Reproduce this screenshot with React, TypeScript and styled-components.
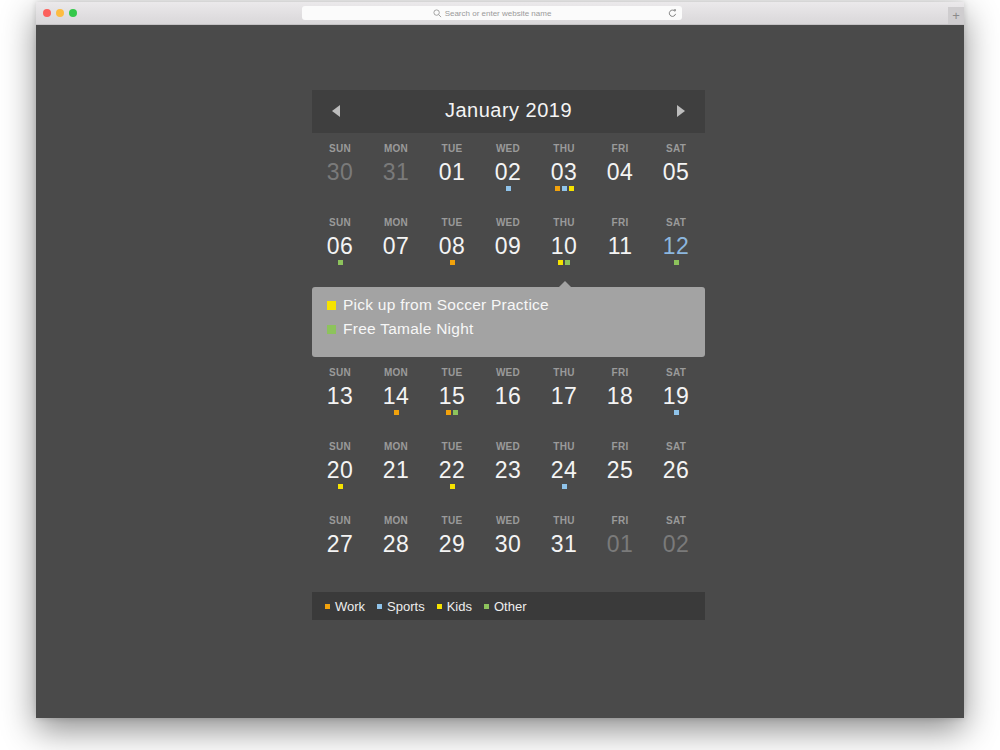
import React from "react";
import styled, { createGlobalStyle, css } from "styled-components";

const GlobalStyle = createGlobalStyle`
  html, body {
    margin: 0;
    padding: 0;
    background: #ffffff;
    font-family: "Liberation Sans", Arial, sans-serif;
  }
`;

const COLORS = {
  work: "#f2a20c",
  sports: "#8fc3ea",
  kids: "#f6e300",
  other: "#8dc35c",
};

type Tag = keyof typeof COLORS;

type Day = {
  num: string;
  muted?: boolean;
  highlight?: boolean;
  tags?: Tag[];
};

const NAMES = ["SUN", "MON", "TUE", "WED", "THU", "FRI", "SAT"];

const weeks: Day[][] = [
  [
    { num: "30", muted: true },
    { num: "31", muted: true },
    { num: "01" },
    { num: "02", tags: ["sports"] },
    { num: "03", tags: ["work", "sports", "kids"] },
    { num: "04" },
    { num: "05" },
  ],
  [
    { num: "06", tags: ["other"] },
    { num: "07" },
    { num: "08", tags: ["work"] },
    { num: "09" },
    { num: "10", tags: ["kids", "other"] },
    { num: "11" },
    { num: "12", highlight: true, tags: ["other"] },
  ],
  [
    { num: "13" },
    { num: "14", tags: ["work"] },
    { num: "15", tags: ["work", "other"] },
    { num: "16" },
    { num: "17" },
    { num: "18" },
    { num: "19", tags: ["sports"] },
  ],
  [
    { num: "20", tags: ["kids"] },
    { num: "21" },
    { num: "22", tags: ["kids"] },
    { num: "23" },
    { num: "24", tags: ["sports"] },
    { num: "25" },
    { num: "26" },
  ],
  [
    { num: "27" },
    { num: "28" },
    { num: "29" },
    { num: "30" },
    { num: "31" },
    { num: "01", muted: true },
    { num: "02", muted: true },
  ],
];

const events: { tag: Tag; title: string }[] = [
  { tag: "kids", title: "Pick up from Soccer Practice" },
  { tag: "other", title: "Free Tamale Night" },
];

const legend: { tag: Tag; label: string }[] = [
  { tag: "work", label: "Work" },
  { tag: "sports", label: "Sports" },
  { tag: "kids", label: "Kids" },
  { tag: "other", label: "Other" },
];

/* browser frame */

const Page = styled.div`
  padding: 2px 36px 32px;
`;

const Window = styled.div`
  display: flex;
  flex-direction: column;
  height: 716px;
  box-shadow: 0 12px 32px rgba(0, 0, 0, 0.45), 0 0 6px rgba(0, 0, 0, 0.15);
`;

const TitleBar = styled.div`
  position: relative;
  display: flex;
  align-items: center;
  height: 22px;
  padding: 0 0 0 7px;
  background: linear-gradient(#ebe9eb, #d9d7d9);
  border-bottom: 1px solid #c4c2c4;
`;

const Lights = styled.div`
  display: flex;
  gap: 5px;
  width: 259px;
`;

const Light = styled.span<{ color: string }>`
  width: 8px;
  height: 8px;
  border-radius: 50%;
  background: ${({ color }) => color};
`;

const AddressBar = styled.div`
  position: relative;
  display: flex;
  align-items: center;
  justify-content: center;
  gap: 3px;
  width: 380px;
  height: 14px;
  background: #fbfbfb;
  border-radius: 3px;
  font-size: 8px;
  color: #9a9a9a;
`;

const Reload = styled.span`
  position: absolute;
  right: 5px;
  top: 2px;
  display: flex;
`;

const PlusButton = styled.div`
  margin-left: auto;
  align-self: flex-end;
  display: flex;
  align-items: center;
  justify-content: center;
  width: 16px;
  height: 17px;
  background: #cfcdcf;
  color: #8a8a8a;
  font-size: 13px;
`;

const Content = styled.div`
  flex: 1;
  background: #4a4a4a;
  padding: 65px 0 0 276px;
`;

/* calendar */

const Calendar = styled.div`
  width: 393px;
  color: #f3f3f3;
`;

const Header = styled.div`
  display: flex;
  align-items: center;
  justify-content: space-between;
  height: 43px;
  padding: 0 19px;
  background: #3f3f3f;
`;

const Title = styled.div`
  font-size: 20px;
  letter-spacing: 0.5px;
  color: #f4f4f4;
  margin-top: -2px;
`;

const ArrowButton = styled.span`
  display: flex;
  width: 10px;
  height: 14px;
  margin-top: -2px;
`;

const Week = styled.div`
  display: grid;
  grid-template-columns: repeat(7, 56px);
  height: 74px;
`;

const Cell = styled.div`
  display: flex;
  flex-direction: column;
  align-items: center;
  padding-top: 10px;
`;

const DayName = styled.div`
  font-size: 10px;
  line-height: 12px;
  font-weight: bold;
  letter-spacing: 0.3px;
  color: #9a9a9a;
`;

const DayNum = styled.div<{ $muted?: boolean; $highlight?: boolean }>`
  margin-top: 4px;
  font-size: 23px;
  line-height: 26px;
  letter-spacing: 0.4px;
  color: #f4f4f4;
  ${({ $muted }) =>
    $muted &&
    css`
      color: #7a7a7a;
    `}
  ${({ $highlight }) =>
    $highlight &&
    css`
      color: #8cb7df;
    `}
`;

const Dots = styled.div`
  display: flex;
  gap: 2px;
  margin-top: 1px;
  height: 5px;
`;

const Dot = styled.span<{ $tag: Tag; $size?: number }>`
  display: block;
  flex-shrink: 0;
  width: ${({ $size = 5 }) => $size}px;
  height: ${({ $size = 5 }) => $size}px;
  background: ${({ $tag }) => COLORS[$tag]};
`;

const Popover = styled.div`
  position: relative;
  margin-top: 6px;
  padding: 6px 15px 16px;
  background: #a3a3a3;
  border-radius: 3px;
  &::before {
    content: "";
    position: absolute;
    top: -6px;
    left: 247px;
    border-left: 6px solid transparent;
    border-right: 6px solid transparent;
    border-bottom: 6px solid #a3a3a3;
  }
`;

const EventRow = styled.div`
  display: flex;
  align-items: center;
  gap: 7px;
  height: 24px;
  font-size: 15.5px;
  color: #f7f7f7;
  letter-spacing: 0.25px;
`;

const Legend = styled.div`
  display: flex;
  align-items: center;
  height: 28px;
  margin-top: 13px;
  padding-left: 13px;
  background: #3a3a3a;
`;

const LegendItem = styled.div`
  display: flex;
  align-items: center;
  gap: 5px;
  margin-right: 12px;
  font-size: 13px;
  color: #eeeeee;
`;

const WeekRow: React.FC<{ days: Day[] }> = ({ days }) => (
  <Week>
    {days.map((d, i) => (
      <Cell key={i}>
        <DayName>{NAMES[i]}</DayName>
        <DayNum $muted={d.muted} $highlight={d.highlight}>
          {d.num}
        </DayNum>
        <Dots>
          {d.tags?.map((t, j) => (
            <Dot key={j} $tag={t} />
          ))}
        </Dots>
      </Cell>
    ))}
  </Week>
);

export default function App() {
  return (
    <>
      <GlobalStyle />
      <Page>
        <Window>
          <TitleBar>
            <Lights>
              <Light color="#fc605c" />
              <Light color="#fdbc40" />
              <Light color="#34c84a" />
            </Lights>
            <AddressBar>
              <svg width="9" height="9" viewBox="0 0 10 10">
                <circle cx="4" cy="4" r="3" fill="none" stroke="#9a9a9a" strokeWidth="1" />
                <line x1="6.2" y1="6.2" x2="9" y2="9" stroke="#9a9a9a" strokeWidth="1" />
              </svg>
              Search or enter website name
              <Reload>
                <svg width="9" height="10" viewBox="0 0 10 10">
                  <path d="M7.8 3.2 A3.5 3.5 0 1 0 8.4 6" fill="none" stroke="#777" strokeWidth="1" />
                  <path d="M6.2 1.2 L8.4 3.4 L8.8 0.8 Z" fill="#777" />
                </svg>
              </Reload>
            </AddressBar>
            <PlusButton>+</PlusButton>
          </TitleBar>
          <Content>
            <Calendar>
              <Header>
                <ArrowButton>
                  <svg width="10" height="14" viewBox="0 0 10 14">
                    <path d="M9 1 L1 7 L9 13 Z" fill="#bdbdbd" />
                  </svg>
                </ArrowButton>
                <Title>January 2019</Title>
                <ArrowButton>
                  <svg width="10" height="14" viewBox="0 0 10 14">
                    <path d="M1 1 L9 7 L1 13 Z" fill="#bdbdbd" />
                  </svg>
                </ArrowButton>
              </Header>
              <WeekRow days={weeks[0]} />
              <WeekRow days={weeks[1]} />
              <Popover>
                {events.map((e) => (
                  <EventRow key={e.title}>
                    <Dot $tag={e.tag} $size={9} />
                    {e.title}
                  </EventRow>
                ))}
              </Popover>
              {weeks.slice(2).map((w, i) => (
                <WeekRow key={i} days={w} />
              ))}
              <Legend>
                {legend.map((l) => (
                  <LegendItem key={l.tag}>
                    <Dot $tag={l.tag} />
                    {l.label}
                  </LegendItem>
                ))}
              </Legend>
            </Calendar>
          </Content>
        </Window>
      </Page>
    </>
  );
}
